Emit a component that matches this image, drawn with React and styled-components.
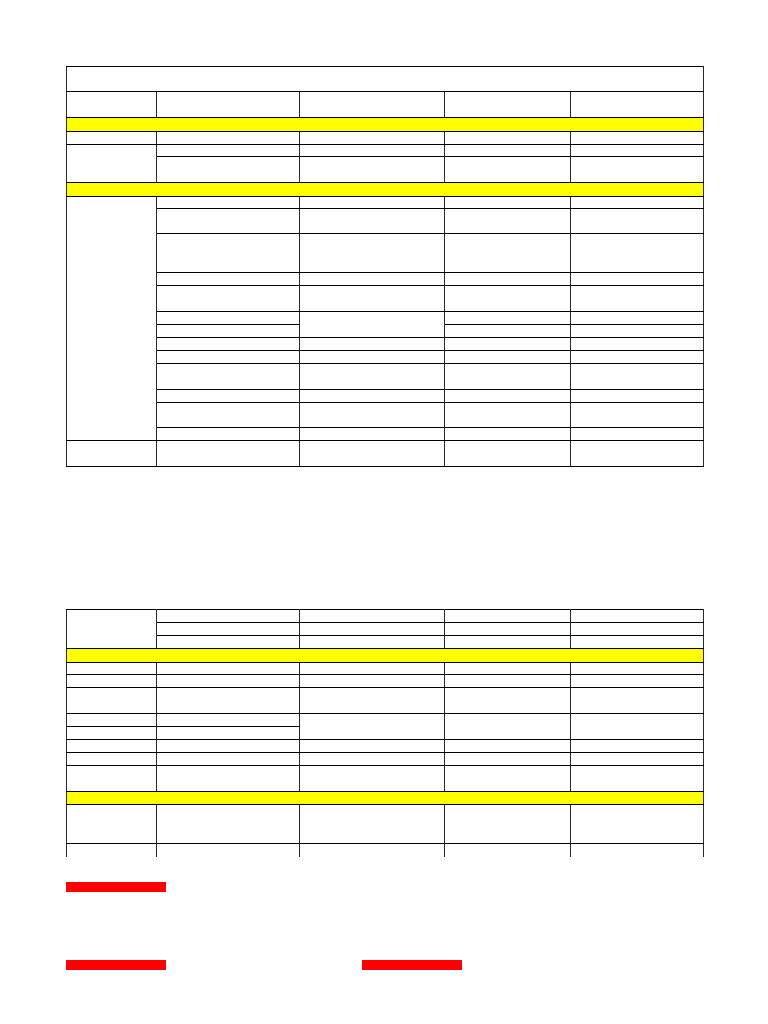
import React from "react";
import styled, { createGlobalStyle, css } from "styled-components";

const Global = createGlobalStyle`
  html, body { margin: 0; padding: 0; background: #ffffff; }
  body { font-family: "Liberation Sans", Arial, sans-serif; }
`;

const Page = styled.div`
  width: 768px;
  min-height: 1024px;
  box-sizing: border-box;
  padding: 66px 0 0 66px;
  display: flex;
  flex-direction: column;
`;

const Grid = styled.table`
  border-collapse: collapse;
  table-layout: fixed;
  width: 637px;
  border: 1px solid #3a3a3a;
  ${(p) =>
    p.$openBottom &&
    css`
      border-bottom: none;
    `}
  margin-top: ${(p) => p.$top || 0}px;
`;

const Cell = styled.td`
  padding: 0;
  font-size: 0;
  line-height: 0;
  border-top: 1px solid #000;
  border-bottom: ${(p) => (p.$open ? "none" : "1px solid #000")};
  border-left: 1px solid #2a2a2a;
  border-right: 1px solid #2a2a2a;
  background: ${(p) => (p.$yellow ? "#ffff00" : "#ffffff")};
`;

const Row = styled.tr``;

const BarRow = styled.div`
  display: flex;
  gap: 196px;
  margin-top: ${(p) => p.$top}px;
`;

const RedBar = styled.div`
  width: 100px;
  height: 10px;
  background: #ff0000;
`;

const widths = [90, 143, 145, 126, 133];

const n = (k) => Array.from({ length: k }, () => ({}));

const table1 = [
  { h: 25, cells: [{ colSpan: 5 }] },
  { h: 26, cells: n(5) },
  { h: 14, yellow: true },
  { h: 13, cells: n(5) },
  { h: 12, cells: [{ rowSpan: 2 }, ...n(4)] },
  { h: 26, cells: n(4) },
  { h: 14, yellow: true },
  { h: 12, cells: [{ rowSpan: 13 }, ...n(4)] },
  { h: 25, cells: n(4) },
  { h: 39, cells: n(4) },
  { h: 13, cells: n(4) },
  { h: 26, cells: n(4) },
  { h: 13, cells: [{}, { rowSpan: 2 }, {}, {}] },
  { h: 13, cells: n(3) },
  { h: 13, cells: n(4) },
  { h: 13, cells: n(4) },
  { h: 26, cells: n(4) },
  { h: 13, cells: n(4) },
  { h: 25, cells: n(4) },
  { h: 13, cells: n(4) },
  { h: 26, cells: n(5) },
];

const table2 = [
  { h: 13, cells: [{ rowSpan: 3 }, ...n(4)] },
  { h: 13, cells: n(4) },
  { h: 13, cells: n(4) },
  { h: 14, yellow: true },
  { h: 12, cells: n(5) },
  { h: 13, cells: n(5) },
  { h: 26, cells: n(5) },
  { h: 13, cells: [{}, {}, { rowSpan: 2 }, { rowSpan: 2 }, { rowSpan: 2 }] },
  { h: 13, cells: n(2) },
  { h: 13, cells: n(5) },
  { h: 13, cells: n(5) },
  { h: 26, cells: n(5) },
  { h: 13, yellow: true },
  { h: 39, cells: n(5) },
  { h: 13, cells: n(5), open: true },
];

function FormTable({ rows, top, openBottom }) {
  return (
    <Grid $top={top} $openBottom={openBottom}>
      <colgroup>
        {widths.map((w, i) => (
          <col key={i} style={{ width: w }} />
        ))}
      </colgroup>
      <tbody>
        {rows.map((r, i) => (
          <Row key={i} style={{ height: r.h }}>
            {r.yellow ? (
              <Cell colSpan={5} $yellow />
            ) : (
              r.cells.map((c, j) => (
                <Cell
                  key={j}
                  colSpan={c.colSpan}
                  rowSpan={c.rowSpan}
                  $open={r.open}
                />
              ))
            )}
          </Row>
        ))}
      </tbody>
    </Grid>
  );
}

export default function App() {
  return (
    <>
      <Global />
      <Page>
        <FormTable rows={table1} />
        <FormTable rows={table2} top={142} openBottom />
        <BarRow $top={25}>
          <RedBar />
        </BarRow>
        <BarRow $top={68}>
          <RedBar />
          <RedBar />
        </BarRow>
      </Page>
    </>
  );
}
